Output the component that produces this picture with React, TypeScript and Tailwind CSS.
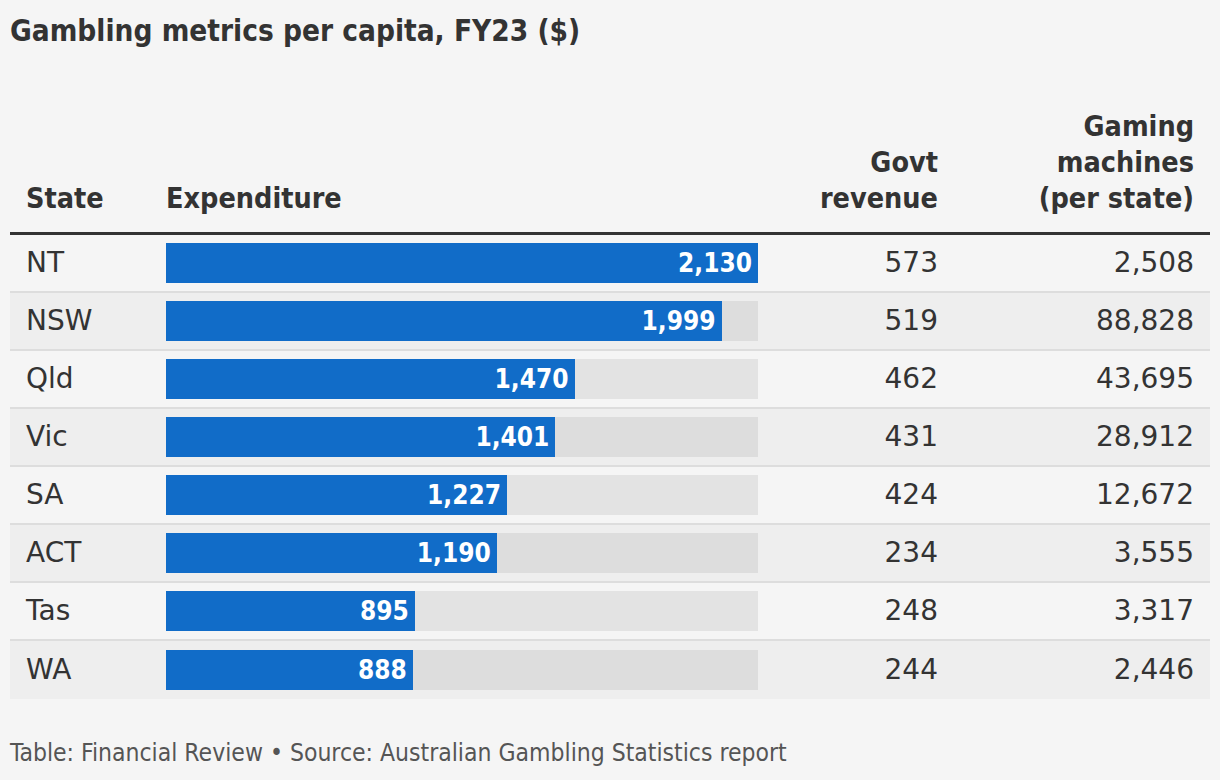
import React from "react";

const rows = [
  { s: "NT", e: 2130, el: "2,130", r: "573", m: "2,508" },
  { s: "NSW", e: 1999, el: "1,999", r: "519", m: "88,828" },
  { s: "Qld", e: 1470, el: "1,470", r: "462", m: "43,695" },
  { s: "Vic", e: 1401, el: "1,401", r: "431", m: "28,912" },
  { s: "SA", e: 1227, el: "1,227", r: "424", m: "12,672" },
  { s: "ACT", e: 1190, el: "1,190", r: "234", m: "3,555" },
  { s: "Tas", e: 895, el: "895", r: "248", m: "3,317" },
  { s: "WA", e: 888, el: "888", r: "244", m: "2,446" },
];

const MAX = 2130;

export default function App() {
  return (
    <div className="w-[1220px] h-[780px] bg-[#f5f5f5] px-[10px] text-[#333] font-['DejaVu_Sans',sans-serif] flex flex-col">
      <div className="pt-[13px] h-[49px] text-[29.5px] leading-[36px] font-bold font-['DejaVu_Sans_Condensed','DejaVu_Sans',sans-serif] font-stretch-condensed">
        Gambling metrics per capita, FY23 ($)
      </div>
      <div className="h-[186px] flex items-end pb-[15px] border-b-[3px] border-[#333] text-[28.5px] leading-[36px] font-bold font-['DejaVu_Sans_Condensed','DejaVu_Sans',sans-serif] font-stretch-condensed">
        <div className="pl-4 w-[156px]">State</div>
        <div className="w-[592px]">Expenditure</div>
        <div className="w-[180px] text-right">Govt<br />revenue</div>
        <div className="w-[256px] text-right">Gaming<br />machines<br />(per state)</div>
      </div>
      <div className="flex flex-col">
        {rows.map((row, i) => (
          <div
            key={row.s}
            className={
              "h-[58px] flex items-center text-[28px] " +
              (i % 2 === 1 ? "bg-[#eeeeee] " : "bg-[#f5f5f5] ") +
              (i < rows.length - 1 ? "border-b-2 border-[#dddddd]" : "")
            }
          >
            <div className="pl-4 w-[156px]">{row.s}</div>
            <div className="w-[592px] h-[40px] bg-black/[0.07] flex">
              <div
                className="h-full bg-[#116cc8] flex items-center justify-end pr-[6px] text-white font-bold text-[26px] font-['DejaVu_Sans_Condensed','DejaVu_Sans',sans-serif] font-stretch-condensed"
                style={{ width: `${(row.e / MAX) * 592}px` }}
              >
                {row.el}
              </div>
            </div>
            <div className="w-[180px] text-right">{row.r}</div>
            <div className="w-[256px] text-right">{row.m}</div>
          </div>
        ))}
      </div>
      <div className="mt-[38px] text-[24.5px] leading-[32px] text-[#555] font-['DejaVu_Sans_Condensed','DejaVu_Sans',sans-serif] font-stretch-condensed">
        Table: Financial Review • Source: Australian Gambling Statistics report
      </div>
    </div>
  );
}
